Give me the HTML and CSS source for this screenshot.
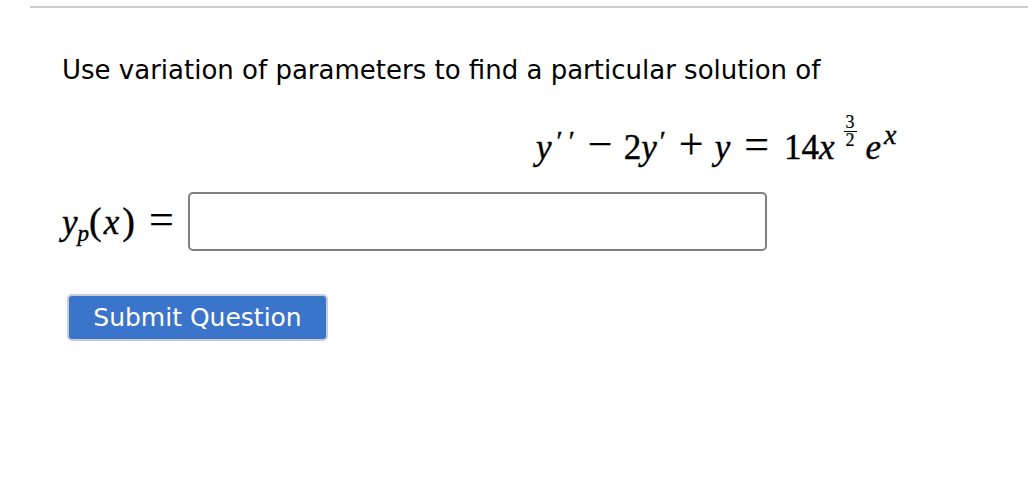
FILE: index.html
```html
<!DOCTYPE html>
<html>
<head>
<meta charset="utf-8">
<link rel="stylesheet" href="styles.css">
</head>
<body>
<div class="rule"></div>
<div class="question">
  <p class="prompt">Use variation of parameters to find a particular solution of</p>
  <div class="display">
    <span class="math"><i>y</i><span class="pr p1">′</span><span class="pr p2">′</span><span class="op bin">−</span>2<i>y</i><span class="pr p3">′</span><span class="op bin">+</span><i>y</i><span class="op rel">=</span>14<i class="xb">x</i><span class="frac"><span class="num">3</span><span class="den">2</span></span><i>e</i><sup><i>x</i></sup></span>
  </div>
  <div class="answer">
    <span class="math lhs"><i>y</i><sub><i>p</i></sub><span class="paren">(</span><i class="xa">x</i><span class="paren">)</span><span class="op rel">=</span></span>
    <input class="field" type="text">
  </div>
  <button class="submit">Submit Question</button>
</div>
</body>
</html>
```
FILE: styles.css
```css
html, body {
  margin: 0;
  padding: 0;
  background: #fff;
}
body {
  font-family: "DejaVu Sans", Verdana, sans-serif;
  color: #000;
}
.rule {
  margin: 6px 0 0 30px;
  height: 2px;
  background: #cccccc;
}
.question {
  padding: 0 0 0 62px;
}
.prompt {
  margin: 45px 0 0 0;
  font-size: 26px;
  line-height: 34px;
}
.math {
  font-family: "Liberation Serif", "Times New Roman", serif;
  font-size: 35px;
  white-space: nowrap;
  -webkit-text-stroke: 0.4px #000;
}
.math i {
  font-style: italic;
}
.op {
  font-size: 44px;
  line-height: 0;
  -webkit-text-stroke: 0.2px #000;
}
.bin {
  margin: 0 11px 0 13px;
}
.rel {
  margin: 0 15px 0 14px;
}
.pr {
  font-style: normal;
  font-size: 28px;
  line-height: 0;
  vertical-align: 9px;
}
.p1 {
  margin-left: 5px;
}
.p2 {
  margin-left: 6px;
}
.p3 {
  margin-left: 3px;
}
.xb {
  margin-right: 7px;
}
.display {
  margin: 28px 0 0 474px;
  height: 66px;
  line-height: 66px;
}
.frac {
  display: inline-flex;
  flex-direction: column;
  align-items: center;
  vertical-align: 31px;
  font-size: 18px;
  font-style: normal;
  margin: 0 9px 0 2px;
  -webkit-text-stroke: 0.2px #000;
}
.num {
  line-height: 12px;
  padding: 0 2px 3px;
  border-bottom: 1.5px solid #000;
}
.den {
  line-height: 12px;
  padding-top: 2px;
}
sup {
  font-size: 28px;
  vertical-align: 15px;
  line-height: 0;
  margin-left: 3px;
}
sub {
  font-size: 23px;
  vertical-align: -7px;
  line-height: 0;
}
.answer {
  margin-top: 11px;
  display: flex;
  align-items: flex-start;
}
.lhs {
  display: block;
  box-sizing: border-box;
  width: 126px;
  line-height: 59px;
  padding-top: 1px;
  font-size: 35px;
}
.paren {
  font-size: 38px;
  line-height: 0;
}
.xa {
  margin: 0 3px 0 2px;
}
.lhs .rel {
  margin: 0 0 0 14px;
}
.field {
  box-sizing: border-box;
  width: 579px;
  height: 59px;
  border: 2px solid #808080;
  border-radius: 5px;
  margin: 0;
  padding: 0;
  background: #fff;
}
.submit {
  display: block;
  margin: 42px 0 0 5px;
  box-sizing: border-box;
  width: 261px;
  height: 47px;
  background: #3b74cb;
  color: #fff;
  border: 2px solid #c8ccd3;
  border-radius: 5px;
  font-family: "DejaVu Sans", Verdana, sans-serif;
  font-size: 25px;
  padding: 0;
}
```
